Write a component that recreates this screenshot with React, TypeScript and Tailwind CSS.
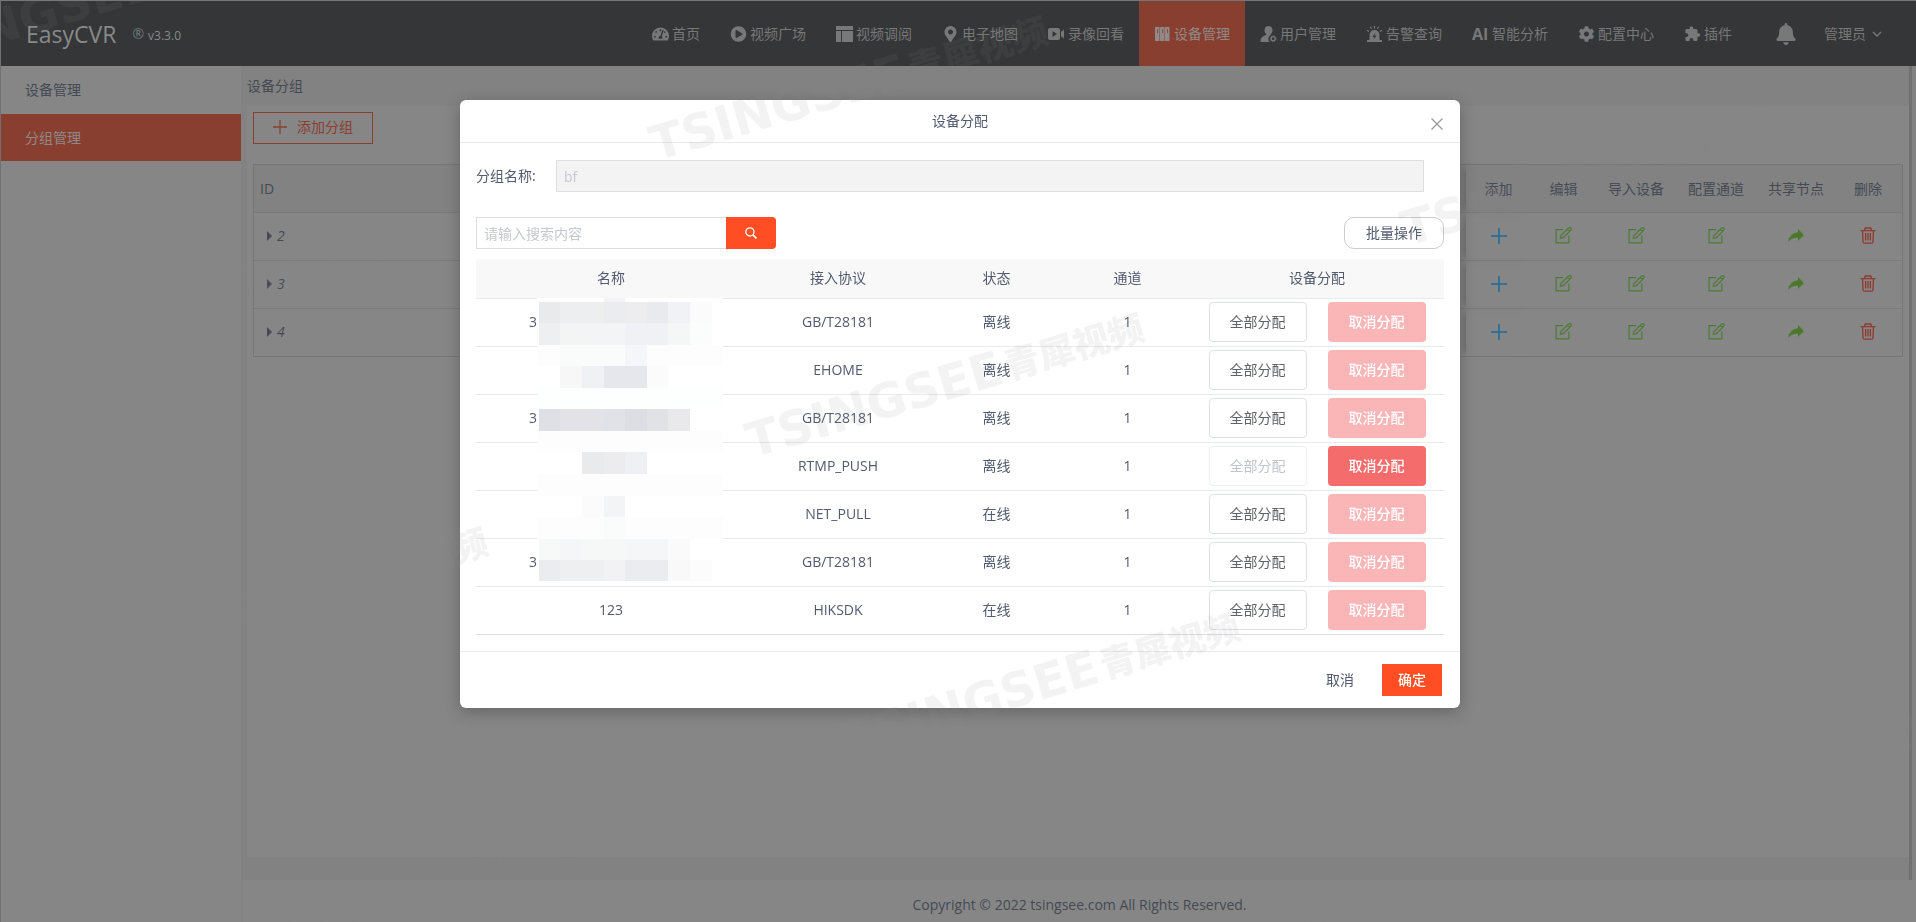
import React, { useState } from "react";
import { FaBell, FaCog, FaMapMarkerAlt, FaPlayCircle, FaTachometerAlt } from "react-icons/fa";
import { MdExtension } from "react-icons/md";

// Icons
interface IconProps {
  className?: string;
}

const LayoutIcon: React.FC<IconProps> = ({ className }) => (
  <svg viewBox="0 0 17 16" fill="currentColor" className={className}>
    <path d="M0 0h17v4H0zM0 5h5v11H0zM6 5h11v11H6z" />
  </svg>
);

const VideoIcon: React.FC<IconProps> = ({ className }) => (
  <svg viewBox="0 0 17 16" fill="currentColor" className={className}>
    <path
      fillRule="evenodd"
      d="M2 2h8a2 2 0 0 1 2 2v8a2 2 0 0 1-2 2H2a2 2 0 0 1-2-2V4a2 2 0 0 1 2-2zm2.500 3v6L9 8z"
    />
    <path d="M13 6l3-2.500v9L13 10z" />
  </svg>
);

const DeviceIcon: React.FC<IconProps> = ({ className }) => (
  <svg viewBox="0 0 15 16" fill="currentColor" className={className}>
    <rect x="0" y="1" width="4.500" height="14" rx="0.5" />
    <rect x="5" y="1" width="4.500" height="14" rx="0.5" />
    <rect x="10" y="1" width="4.500" height="14" rx="0.5" />
    <path d="M2 3h.8v4H2zM7 3h.8v4H7zM12 3h.8v4H12z" fill="#883f30" />
  </svg>
);

const UserIcon: React.FC<IconProps> = ({ className }) => (
  <svg viewBox="0 0 16 16" fill="currentColor" className={className}>
    <path d="M8 0c2.400 0 4 1.800 4 4.200 0 1.700-.8 3.200-1.800 4v.8A4.600 4.600 0 0 0 9 16H0c0-3.500.8-5.400 5.800-7v-.8C4.800 7.400 4 5.900 4 4.200 4 1.800 5.600 0 8 0z" />
    <circle cx="12.700" cy="12.700" r="2" fill="none" stroke="currentColor" strokeWidth="1.300" />
    <circle
      cx="12.700"
      cy="12.700"
      r="3"
      fill="none"
      stroke="currentColor"
      strokeWidth="0.900"
      strokeDasharray="1.200 1.150"
    />
  </svg>
);

const AlarmIcon: React.FC<IconProps> = ({ className }) => (
  <svg viewBox="0 0 17 16" fill="currentColor" className={className}>
    <path
      fillRule="evenodd"
      d="M3.500 14V9a5 5 0 0 1 10 0v5H16v2H1v-2zM9.200 7l-2.700 4h1.700l-.6 2.500 2.900-3.800H8.800z"
    />
    <path
      d="M8.500 0v2.500M4.500 .8l1 2M12.500 .8l-1 2M1 4.200l2 1.300M16 4.200l-2 1.300"
      stroke="currentColor"
      strokeWidth="1.200"
    />
  </svg>
);

const PlusIcon: React.FC<IconProps> = ({ className }) => (
  <svg
    viewBox="0 0 16 16"
    fill="none"
    stroke="currentColor"
    strokeWidth="1.500"
    className={className}
  >
    <path d="M8 0v16M0 8h16" />
  </svg>
);

const EditIcon: React.FC<IconProps> = ({ className }) => (
  <svg
    viewBox="0 0 17 17"
    fill="none"
    stroke="currentColor"
    strokeWidth="1.200"
    className={className}
  >
    <path d="M8 2.600H1.100v13.300h12.800V8.500" />
    <path d="M5.300 11.300l.8-3 7.600-7.400a1.200 1.200 0 0 1 1.700 0l.5.5a1.200 1.200 0 0 1 0 1.700l-7.500 7.500zM12.400 2.300l2.200 2.200" />
  </svg>
);

const ShareIcon: React.FC<IconProps> = ({ className }) => (
  <svg viewBox="0 0 16 13" fill="currentColor" className={className}>
    <path d="M10 0l6 6.200-6 5.600V8.700C6 8.500 2.500 9.500 0 13 1 7.500 4.500 4 10 3.300z" />
  </svg>
);

const TrashIcon: React.FC<IconProps> = ({ className }) => (
  <svg
    viewBox="0 0 16 17"
    fill="none"
    stroke="currentColor"
    strokeWidth="1.300"
    className={className}
  >
    <path d="M.5 3.600h15M4.500 3.500L5.200 1h5.600l.7 2.500M2.600 3.600l.4 11.400a1.300 1.300 0 0 0 1.300 1.200h7.400A1.300 1.300 0 0 0 13 15l.4-11.400" />
    <path d="M5.600 6v7.500M8 6v7.500M10.400 6v7.500" />
  </svg>
);

const SearchIcon: React.FC<IconProps> = ({ className }) => (
  <svg
    viewBox="0 0 12 12"
    fill="none"
    stroke="currentColor"
    strokeWidth="1.300"
    className={className}
  >
    <circle cx="4.900" cy="4.900" r="4.100" />
    <path d="M7.900 7.900l3.600 3.600" strokeWidth="1.800" />
  </svg>
);

const CloseIcon: React.FC<IconProps> = ({ className }) => (
  <svg viewBox="0 0 12 12" fill="none" stroke="currentColor" className={className}>
    <path d="M.5 .5l11 11M11.500 .5l-11 11" strokeWidth="1.300" />
  </svg>
);

const ChevronIcon: React.FC<IconProps> = ({ className }) => (
  <svg viewBox="0 0 10 10" fill="none" stroke="currentColor" className={className}>
    <path d="M1 3l4 4 4-4" strokeWidth="1.400" />
  </svg>
);

// Header
const navItems = [
  { label: "首页", icon: <FaTachometerAlt className="w-[17px] h-4" /> },
  { label: "视频广场", icon: <FaPlayCircle className="w-[17px] h-4" /> },
  { label: "视频调阅", icon: <LayoutIcon className="w-[17px] h-4" /> },
  { label: "电子地图", icon: <FaMapMarkerAlt className="w-[17px] h-4" /> },
  { label: "录像回看", icon: <VideoIcon className="w-[17px] h-4" /> },
  { label: "设备管理", icon: <DeviceIcon className="w-[17px] h-4" /> },
  { label: "用户管理", icon: <UserIcon className="w-[17px] h-4" /> },
  { label: "告警查询", icon: <AlarmIcon className="w-[17px] h-4" /> },
  {
    label: "智能分析",
    icon: <span className="w-[17px] text-base leading-4 font-bold">AI</span>,
  },
  { label: "配置中心", icon: <FaCog className="w-[17px] h-4" /> },
  { label: "插件", icon: <MdExtension className="w-[17px] h-[18px]" /> },
];

const Header: React.FC = () => (
  <header className="flex h-[66px] shrink-0 items-stretch border-t border-[#72797a] bg-[#343637] text-[#777878]">
    <div className="flex items-center pl-[25px]">
      <span className="text-[23px] text-[#888a8a]">EasyCVR</span>
      <span className="ml-4 text-sm text-[#6f7b7e]">®</span>
      <span className="ml-1 mt-1 text-xs text-[#888a8a]">v3.3.0</span>
    </div>
    <nav className="ml-auto flex">
      {navItems.map((item) => (
        <a
          key={item.label}
          href="#"
          className={`flex items-center gap-[3px] px-[15px] whitespace-nowrap ${
            item.label === "设备管理" ? "bg-[#883f30] text-[#918987]" : ""
          }`}
        >
          {item.icon}
          <span>{item.label}</span>
        </a>
      ))}
    </nav>
    <button aria-label="消息" className="ml-[29px]">
      <FaBell className="w-5 h-[22px]" />
    </button>
    <button className="ml-7 mr-[34px] flex items-center gap-1.5">
      管理员
      <ChevronIcon className="size-[10px]" />
    </button>
  </header>
);

// Group table behind the dialog
const groupColumns = [
  { label: "添加", width: "w-[65px]" },
  { label: "编辑", width: "w-[65px]" },
  { label: "导入设备", width: "w-[80px]" },
  { label: "配置通道", width: "w-[80px]" },
  { label: "共享节点", width: "w-[80px]" },
  { label: "删除", width: "w-[66px] pr-0.5" },
];

const groupIcons = [
  <PlusIcon className="size-4 text-[#1f6a96]" />,
  <EditIcon className="size-[17px] text-[#4a7c35]" />,
  <EditIcon className="size-[17px] text-[#4a7c35]" />,
  <EditIcon className="size-[17px] text-[#4a7c35]" />,
  <ShareIcon className="w-4 h-[13px] text-[#487a2a]" />,
  <TrashIcon className="w-4 h-[17px] text-[#8f3a2c]" />,
];

const GroupTable: React.FC = () => (
  <table className="w-full table-fixed border-separate border-spacing-0 border border-[#767677]">
    <thead>
      <tr className="h-12 bg-[#828282]">
        <th className="border-b border-[#7a7a7b] pl-1.5 text-left font-normal">ID</th>
        {groupColumns.map((col, i) => (
          <th
            key={col.label}
            className={`${col.width} border-b border-[#7a7a7b] font-normal ${
              i === 0 ? "shadow-[-6px_0_6px_-4px_#6d6d6d]" : ""
            }`}
          >
            {col.label}
          </th>
        ))}
      </tr>
    </thead>
    <tbody>
      {[2, 3, 4].map((id) => (
        <tr
          key={id}
          className="h-12 last:h-[47px] [&>td]:border-b [&>td]:border-[#7a7a7b] last:[&>td]:border-b-0"
        >
          <td className="pb-0.5 pl-[13px] italic">
            <span className="flex items-center gap-[5px]">
              <svg viewBox="0 0 5 10" fill="currentColor" className="w-[5px] h-[10px]">
                <path d="M0 0l5 5-5 5z" />
              </svg>
              {id}
            </span>
          </td>
          {groupColumns.map((col, i) => (
            <td
              key={col.label}
              className={`pb-0.5 ${col.width} ${
                i === 0 ? "shadow-[-6px_0_6px_-4px_#6d6d6d]" : ""
              }`}
            >
              <button aria-label={col.label} className="mx-auto flex">
                {groupIcons[i]}
              </button>
            </td>
          ))}
        </tr>
      ))}
    </tbody>
  </table>
);

// Pixelated device names: [x, y, width, height, colour]
const mosaicCells: [number, number, number, number, string][] = [
  [67, 0, 21, 4, "#f3f3f5"],
  [2, 4, 21, 21, "#e9eaec"],
  [23, 4, 44, 21, "#edeef0"],
  [67, 4, 21, 21, "#eaecef"],
  [88, 4, 22, 21, "#ededf0"],
  [110, 4, 21, 21, "#e9eaed"],
  [131, 4, 22, 21, "#f1f2f5"],
  [153, 4, 22, 21, "#fbfbfc"],
  [2, 25, 21, 22, "#eeeff1"],
  [23, 25, 22, 22, "#f3f4f4"],
  [45, 25, 43, 22, "#f2f4f5"],
  [88, 25, 22, 22, "#eff1f4"],
  [110, 25, 21, 22, "#f0f1f4"],
  [131, 25, 22, 22, "#f5f7f7"],
  [153, 25, 22, 22, "#fbfcfc"],
  [0, 47, 186, 21, "#fdfdfd"],
  [23, 47, 65, 21, "#fafbfb"],
  [88, 47, 22, 21, "#f5f6f9"],
  [23, 68, 22, 22, "#f7f7f8"],
  [45, 68, 22, 22, "#f0f1f4"],
  [67, 68, 43, 22, "#e6e7ec"],
  [110, 68, 21, 22, "#fbfbfc"],
  [0, 90, 186, 21, "#fdfffe"],
  [2, 111, 21, 22, "#dfe0e5"],
  [23, 111, 44, 22, "#e3e3e7"],
  [67, 111, 21, 22, "#e1e2e7"],
  [88, 111, 22, 22, "#dddee3"],
  [110, 111, 21, 22, "#e1e2e6"],
  [131, 111, 22, 22, "#e9e9ec"],
  [0, 133, 186, 21, "#fdfdfd"],
  [45, 154, 22, 22, "#e9eaec"],
  [67, 154, 21, 22, "#ececef"],
  [88, 154, 22, 22, "#eff0f3"],
  [0, 176, 186, 22, "#fdfdfd"],
  [45, 198, 22, 21, "#fbfbfc"],
  [67, 198, 21, 21, "#f3f4f6"],
  [0, 219, 186, 22, "#fdfdfd"],
  [67, 219, 21, 22, "#fafbfb"],
  [2, 241, 21, 21, "#f7f8f8"],
  [23, 241, 22, 21, "#f5f6f8"],
  [45, 241, 43, 21, "#f6f7f7"],
  [88, 241, 43, 21, "#f5f6f7"],
  [131, 241, 22, 21, "#fafafb"],
  [2, 262, 21, 21, "#ebecef"],
  [23, 262, 44, 21, "#eeeff1"],
  [67, 262, 21, 21, "#f2f2f4"],
  [88, 262, 43, 21, "#ebecef"],
  [131, 262, 22, 21, "#f9f9fa"],
  [153, 262, 22, 21, "#fcfcfc"],
];

const NameMosaic: React.FC = () => (
  <svg
    width="186"
    height="286"
    aria-hidden="true"
    className="absolute left-[61px] top-[39px]"
  >
    <rect width="186" height="286" fill="#fff" />
    {mosaicCells.map(([x, y, w, h, fill]) => (
      <rect key={`${x}-${y}`} x={x} y={y} width={w} height={h} fill={fill} />
    ))}
  </svg>
);

// Device assignment dialog
const devices = [
  { name: "3", protocol: "GB/T28181", status: "离线", channels: 1 },
  { name: "", protocol: "EHOME", status: "离线", channels: 1 },
  { name: "3", protocol: "GB/T28181", status: "离线", channels: 1 },
  { name: "", protocol: "RTMP_PUSH", status: "离线", channels: 1, assigned: true },
  { name: "", protocol: "NET_PULL", status: "在线", channels: 1 },
  { name: "3", protocol: "GB/T28181", status: "离线", channels: 1 },
  { name: "123", protocol: "HIKSDK", status: "在线", channels: 1 },
];

const DeviceTable: React.FC = () => (
  <div className="relative mt-[10px] border-b border-[#dcdee2]">
    <table className="w-full table-fixed text-center">
      <thead>
        <tr className="h-[39px] border-b border-[#e8eaec] bg-[#f8f8f8]">
          <th className="w-[270px] font-normal">名称</th>
          <th className="w-[184px] font-normal">接入协议</th>
          <th className="w-[133px] font-normal">状态</th>
          <th className="w-[129px] font-normal">通道</th>
          <th className="pr-0.5 font-normal">设备分配</th>
        </tr>
      </thead>
      <tbody>
        {devices.map((device, i) => (
          <tr key={i} className="h-12 border-b border-[#e8eaec] last:border-b-0">
            <td className={device.name === "3" ? "pl-[53px] text-left" : ""}>
              {device.name}
            </td>
            <td>{device.protocol}</td>
            <td>{device.status}</td>
            <td>{device.channels}</td>
            <td className="pr-0.5">
              <div className="flex justify-center gap-[21px]">
                <button
                  disabled={device.assigned}
                  className="h-10 w-[98px] rounded border border-[#dcdfe6] bg-white text-[#606266] disabled:border-[#ebeef5] disabled:text-[#c0c4cc]"
                >
                  全部分配
                </button>
                <button
                  disabled={!device.assigned}
                  className="h-10 w-[98px] rounded bg-[#f56c6c] font-medium text-white disabled:bg-[#fab6b6]"
                >
                  取消分配
                </button>
              </div>
            </td>
          </tr>
        ))}
      </tbody>
    </table>
    <NameMosaic />
  </div>
);

const AssignDialog: React.FC = () => {
  const [keyword, setKeyword] = useState("");

  return (
    <div className="fixed inset-0 flex items-start justify-center pl-1 pt-[100px] text-[#515a6e]">
      <div
        role="dialog"
        aria-labelledby="assign-title"
        className="w-[1000px] max-w-full rounded-md bg-white shadow-[0_4px_16px_rgba(0,0,0,0.25)]"
      >
        <div className="relative flex h-[43px] items-center justify-center border-b border-[#e8eaec]">
          <h2 id="assign-title">设备分配</h2>
          <button
            aria-label="关闭"
            className="absolute right-[17px] top-[18px] text-[#999]"
          >
            <CloseIcon className="size-3" />
          </button>
        </div>

        <div className="px-4 pb-4 pt-[17px]">
          <div className="flex items-center pr-[20px]">
            <label htmlFor="group-name" className="w-20">
              分组名称:
            </label>
            <input
              id="group-name"
              disabled
              value="bf"
              className="h-8 flex-1 border border-[#dcdee2] bg-[#f3f3f3] px-[7px] text-[#c5c8ce]"
            />
          </div>

          <div className="mt-[25px] flex items-center">
            <input
              aria-label="搜索"
              value={keyword}
              onChange={(e) => setKeyword(e.target.value)}
              placeholder="请输入搜索内容"
              className="h-8 w-[250px] border border-r-0 border-[#dcdee2] px-[7px] placeholder:text-[#c5c8ce]"
            />
            <button
              aria-label="搜索"
              className="flex h-8 w-[50px] items-center justify-center rounded-r bg-[#ff4e23] text-white"
            >
              <SearchIcon className="size-3" />
            </button>
            <button className="ml-auto h-8 w-[100px] rounded-[10px] border border-[#ccc]">
              批量操作
            </button>
          </div>

          <DeviceTable />
        </div>

        <div className="flex h-[57px] items-center justify-end gap-[28px] border-t border-[#e8eaec] pr-[18px]">
          <button>取消</button>
          <button className="h-8 w-[60px] bg-[#ff4e23] font-medium text-white">确定</button>
        </div>
      </div>
    </div>
  );
};

// Tiled watermark across the whole window
const marks = [
  [-96, 72],
  [656, 161],
  [752, 458],
  [848, 757],
  [-1, 372],
  [96, 672],
  [192, 972],
  [1407, 246],
  [1502, 543],
  [1597, 841],
  [943, 1054],
];

const Watermark: React.FC = () => (
  <svg aria-hidden="true" className="pointer-events-none fixed inset-0 size-full">
    {marks.map(([x, y]) => (
      <g
        key={`${x}-${y}`}
        transform={`translate(${x} ${y}) rotate(-16.500)`}
        className="fill-[#868686]/10"
      >
        <text fontSize="48" fontFamily="DejaVu Sans" fontWeight="700">
          TSINGSEE
        </text>
        <text x="268" y="-2" fontSize="36" fontFamily="Noto Sans CJK SC" fontWeight="900">
          青犀视频
        </text>
      </g>
    ))}
  </svg>
);

export default function App() {
  return (
    <div className="flex h-screen flex-col border-l border-[#6f7074] bg-[#828282] font-['Open_Sans','Noto_Sans_CJK_SC',sans-serif] text-sm leading-5 text-[#444a54]">
      <Header />

      <div className="flex min-h-0 flex-1">
        <aside className="w-60 shrink-0 bg-[#868686]">
          <a href="#" className="flex h-12 items-center pl-6">
            设备管理
          </a>
          <a
            href="#"
            className="flex h-[47px] items-center bg-[#883f30] pl-6 text-[#918987]"
          >
            分组管理
          </a>
        </aside>

        <div className="flex min-w-0 flex-1 flex-col">
          <div className="mr-1 flex flex-1 flex-col border-r-[3px] border-[#717171] pb-[23px] pl-1.5">
            <div className="flex h-10 items-center">设备分组</div>
            <main className="flex-1 bg-[#868686] pl-1.5 pr-1.5 pt-1.5">
              <button className="flex h-8 w-[120px] items-center justify-center gap-[10px] border border-[#8b4030] pb-0.5 text-[#8b4030]">
                <PlusIcon className="size-[14px]" />
                添加分组
              </button>
              <div className="mt-5">
                <GroupTable />
              </div>
            </main>
          </div>
          <footer className="ml-0.5 flex h-[42px] items-center justify-center bg-[#868686] pt-2">
            Copyright © 2022 tsingsee.com All Rights Reserved.
          </footer>
        </div>
      </div>

      <AssignDialog />
      <Watermark />
    </div>
  );
}
